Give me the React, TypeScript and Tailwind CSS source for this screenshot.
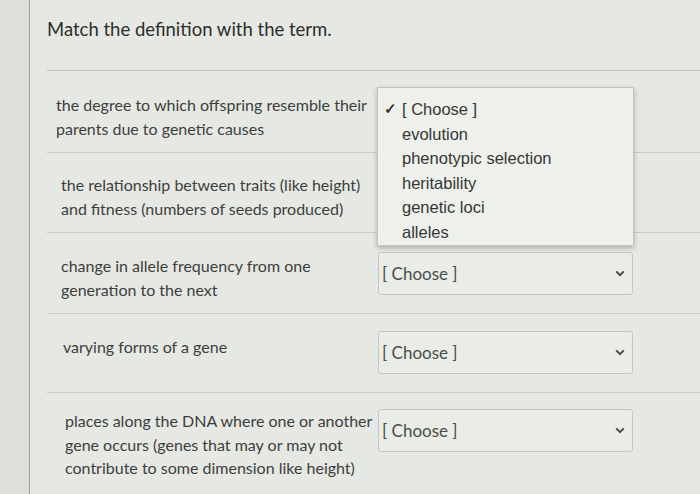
import React from "react";

const rows = [
  { lines: ["the degree to which offspring resemble their", "parents due to genetic causes"], h: 82, pl: 9, pt: 22, st: 19, covered: true },
  { lines: ["the relationship between traits (like height)", "and fitness (numbers of seeds produced)"], h: 80, pl: 14, pt: 20, st: 18, covered: true },
  { lines: ["change in allele frequency from one", "generation to the next"], h: 81, pl: 14, pt: 21, st: 19, covered: false },
  { lines: ["varying forms of a gene"], h: 79, pl: 16, pt: 21, st: 17, covered: false },
  { lines: ["places along the DNA where one or another", "gene occurs (genes that may or may not", "contribute to some dimension like height)"], h: 110, pl: 18, pt: 16, st: 16, covered: false },
];

const options = ["evolution", "phenotypic selection", "heritability", "genetic loci", "alleles"];

function Chevron() {
  return (
    <svg width="10" height="7" viewBox="0 0 10 7" className="shrink-0">
      <path d="M1.2 1.4 L5 5.2 L8.8 1.4" fill="none" stroke="#4a4c4a" strokeWidth="2" />
    </svg>
  );
}

export default function App() {
  return (
    <div
      className="w-[700px] h-[494px] flex overflow-hidden bg-[#e5e8e3] text-[#3d3f3d]"
      style={{ fontFamily: "Lato, 'Open Sans', sans-serif" }}
    >
      <div className="w-[30px] shrink-0 bg-[#dedfdb] border-r border-[#9a9c98]" />
      <div className="relative flex-1 pl-[17px]">
        <div className="h-[70px] pt-[17px] text-[18.5px] leading-[24px] text-[#2c2e2c]">
          Match the definition with the term.
        </div>
        <div className="border-t border-[#bcbfba]">
          {rows.map((r, i) => (
            <div
              key={i}
              className={`flex ${i < rows.length - 1 ? "border-b border-[#c9ccc6]" : ""}`}
              style={{ height: r.h }}
            >
              <div className="w-[331px] shrink-0 text-[16px] leading-[23.5px]" style={{ paddingLeft: r.pl, paddingTop: r.pt }}>
                {r.lines.map((l, j) => (
                  <div key={j} className="whitespace-nowrap">{l}</div>
                ))}
              </div>
              <div
                className="w-[255px] h-[43px] flex items-center justify-between pl-[3px] pr-[7px] border border-[#c4c7c1] rounded-[3px] bg-[#e9ece7] text-[17px] text-[#4a4c4a]"
                style={{ marginTop: r.st }}
              >
                {r.covered ? null : (
                  <>
                    <span>[ Choose ]</span>
                    <Chevron />
                  </>
                )}
              </div>
            </div>
          ))}
        </div>
        <div
          className="absolute left-[347px] top-[87px] w-[257px] h-[159px] bg-[#eef0ec] border border-[#c3c5c0] shadow-[0_2px_5px_rgba(0,0,0,0.25)] pt-[9px] text-[16.5px] leading-[24.6px] text-[#353735]"
          style={{ fontFamily: "'Liberation Sans', Arial, sans-serif" }}
        >
          <div className="flex items-center pl-[6px]">
            <span className="w-[18px] text-[15px] font-bold text-[#2e302e]">✓</span>
            <span>[ Choose ]</span>
          </div>
          {options.map((o) => (
            <div key={o} className="pl-[24px]">{o}</div>
          ))}
        </div>
      </div>
    </div>
  );
}
